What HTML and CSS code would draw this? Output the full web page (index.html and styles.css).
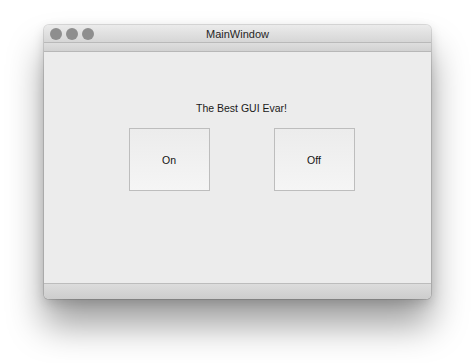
FILE: index.html
```html
<!DOCTYPE html>
<html lang="en">
<head>
    <meta charset="UTF-8">
    <title>MainWindow</title>
    <link rel="stylesheet" href="styles.css">
</head>
<body>
    <div class="window">
        <div class="titlebar">
            <div class="lights">
                <span class="light"></span>
                <span class="light"></span>
                <span class="light"></span>
            </div>
            <div class="title">MainWindow</div>
        </div>
        <div class="toolbar"></div>
        <div class="content">
            <div class="label">The Best GUI Evar!</div>
            <div class="buttons">
                <button class="push">On</button>
                <button class="push">Off</button>
            </div>
        </div>
        <div class="statusbar"></div>
    </div>
</body>
</html>
```

FILE: styles.css
```css
* {
    margin: 0;
    padding: 0;
    box-sizing: border-box;
}

body {
    font-family: "Liberation Sans", Arial, sans-serif;
    background-color: #fff;
    width: 474px;
    height: 363px;
    overflow: hidden;
}

.window {
    margin: 25px 0 0 44px;
    width: 387px;
    height: 274px;
    display: flex;
    flex-direction: column;
    background-color: #ececec;
    border-radius: 5px;
    box-shadow: 0 0 0 1px rgba(0,0,0,0.12), 0 4px 12px rgba(0,0,0,0.15), 0 26px 36px rgba(0,0,0,0.38);
    overflow: hidden;
}

.titlebar {
    height: 18px;
    display: flex;
    align-items: center;
    position: relative;
    background: linear-gradient(#ebebeb, #d6d6d6);
    border-bottom: 1px solid #b9b9b9;
}

.lights {
    display: flex;
    gap: 4px;
    padding-left: 6px;
}

.light {
    width: 12px;
    height: 12px;
    border-radius: 50%;
    background-color: #8e8e8e;
}

.title {
    position: absolute;
    left: 0;
    right: 0;
    text-align: center;
    font-size: 11px;
    color: #262626;
}

.toolbar {
    height: 9px;
    background: linear-gradient(#dedede, #d2d2d2);
    border-bottom: 1px solid #b7b7b7;
}

.content {
    flex: 1;
    display: flex;
    flex-direction: column;
    align-items: center;
    padding: 50px 0 0 8px;
}

.label {
    font-size: 10.5px;
    color: #1a1a1a;
    height: 13px;
    line-height: 13px;
}

.buttons {
    display: flex;
    gap: 64px;
    margin-top: 13px;
}

.push {
    width: 81px;
    height: 63px;
    font-family: inherit;
    font-size: 10.5px;
    color: #111;
    border: 1px solid #bdbdbd;
    background: linear-gradient(#ececec, #f5f5f5);
}

.statusbar {
    height: 16px;
    border-top: 1px solid #bcbcbc;
    background: linear-gradient(#dcdcdc, #cdcdcd);
}
```
